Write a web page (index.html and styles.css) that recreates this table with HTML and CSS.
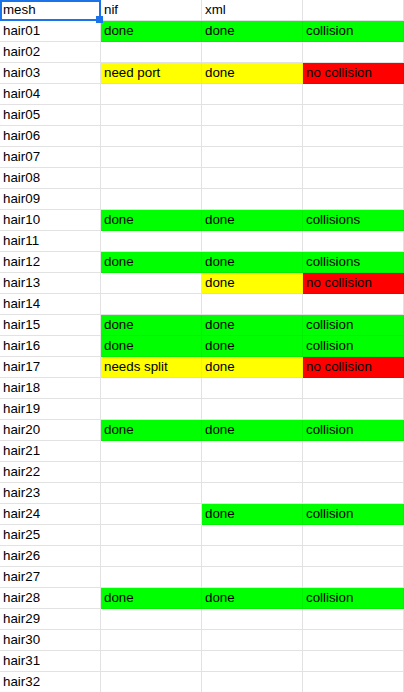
FILE: index.html
```html
<!DOCTYPE html>
<html>
<head>
<meta charset="utf-8">
<link rel="stylesheet" href="styles.css">
</head>
<body>
<div class="sheet">
  <div class="cell selected">mesh<span class="sel-box"></span><span class="handle"></span></div><div class="cell">nif</div><div class="cell">xml</div><div class="cell"></div>
  <div class="cell">hair01</div><div class="cell g">done</div><div class="cell g">done</div><div class="cell g">collision</div>
  <div class="cell">hair02</div><div class="cell"></div><div class="cell"></div><div class="cell"></div>
  <div class="cell">hair03</div><div class="cell y">need port</div><div class="cell y">done</div><div class="cell r">no collision</div>
  <div class="cell">hair04</div><div class="cell"></div><div class="cell"></div><div class="cell"></div>
  <div class="cell">hair05</div><div class="cell"></div><div class="cell"></div><div class="cell"></div>
  <div class="cell">hair06</div><div class="cell"></div><div class="cell"></div><div class="cell"></div>
  <div class="cell">hair07</div><div class="cell"></div><div class="cell"></div><div class="cell"></div>
  <div class="cell">hair08</div><div class="cell"></div><div class="cell"></div><div class="cell"></div>
  <div class="cell">hair09</div><div class="cell"></div><div class="cell"></div><div class="cell"></div>
  <div class="cell">hair10</div><div class="cell g">done</div><div class="cell g">done</div><div class="cell g">collisions</div>
  <div class="cell">hair11</div><div class="cell"></div><div class="cell"></div><div class="cell"></div>
  <div class="cell">hair12</div><div class="cell g">done</div><div class="cell g">done</div><div class="cell g">collisions</div>
  <div class="cell">hair13</div><div class="cell"></div><div class="cell y">done</div><div class="cell r">no collision</div>
  <div class="cell">hair14</div><div class="cell"></div><div class="cell"></div><div class="cell"></div>
  <div class="cell">hair15</div><div class="cell g">done</div><div class="cell g">done</div><div class="cell g">collision</div>
  <div class="cell">hair16</div><div class="cell g">done</div><div class="cell g">done</div><div class="cell g">collision</div>
  <div class="cell">hair17</div><div class="cell y">needs split</div><div class="cell y">done</div><div class="cell r">no collision</div>
  <div class="cell">hair18</div><div class="cell"></div><div class="cell"></div><div class="cell"></div>
  <div class="cell">hair19</div><div class="cell"></div><div class="cell"></div><div class="cell"></div>
  <div class="cell">hair20</div><div class="cell g">done</div><div class="cell g">done</div><div class="cell g">collision</div>
  <div class="cell">hair21</div><div class="cell"></div><div class="cell"></div><div class="cell"></div>
  <div class="cell">hair22</div><div class="cell"></div><div class="cell"></div><div class="cell"></div>
  <div class="cell">hair23</div><div class="cell"></div><div class="cell"></div><div class="cell"></div>
  <div class="cell">hair24</div><div class="cell"></div><div class="cell g">done</div><div class="cell g">collision</div>
  <div class="cell">hair25</div><div class="cell"></div><div class="cell"></div><div class="cell"></div>
  <div class="cell">hair26</div><div class="cell"></div><div class="cell"></div><div class="cell"></div>
  <div class="cell">hair27</div><div class="cell"></div><div class="cell"></div><div class="cell"></div>
  <div class="cell">hair28</div><div class="cell g">done</div><div class="cell g">done</div><div class="cell g">collision</div>
  <div class="cell">hair29</div><div class="cell"></div><div class="cell"></div><div class="cell"></div>
  <div class="cell">hair30</div><div class="cell"></div><div class="cell"></div><div class="cell"></div>
  <div class="cell">hair31</div><div class="cell"></div><div class="cell"></div><div class="cell"></div>
  <div class="cell">hair32</div><div class="cell"></div><div class="cell"></div><div class="cell"></div>
</div>
</body>
</html>
```
FILE: styles.css
```css
html, body {
  margin: 0;
  padding: 0;
  background: #ffffff;
  overflow: hidden;
}
.sheet {
  display: grid;
  grid-template-columns: 101px 101px 101px 101px;
  grid-auto-rows: 21px;
  font-family: "Liberation Sans", Arial, sans-serif;
  font-size: 13.33px;
  color: #000000;
}
.cell {
  box-sizing: border-box;
  height: 21px;
  line-height: 20px;
  padding-left: 3px;
  border-right: 1px solid #e2e2e2;
  border-bottom: 1px solid #e2e2e2;
  white-space: nowrap;
  overflow: hidden;
}
.cell.g { background: #00ff00; border-color: rgba(0, 0, 0, 0.05); }
.cell.y { background: #ffff00; border-color: rgba(0, 0, 0, 0.04); }
.cell.r { background: #ff0000; border-color: rgba(0, 0, 0, 0.05); }
.selected {
  position: relative;
  overflow: visible;
  z-index: 2;
}
.sel-box {
  position: absolute;
  left: 0;
  top: 0;
  width: 101px;
  height: 21px;
  box-sizing: border-box;
  border: 2px solid #1a73e8;
  pointer-events: none;
}
.handle {
  position: absolute;
  left: 96px;
  top: 16px;
  width: 7px;
  height: 7px;
  background: #1a73e8;
  border: 1px solid #ffffff;
  box-sizing: border-box;
  display: none;
}
.selected .handle {
  display: block;
  left: 96px;
  top: 16px;
  width: 7px;
  height: 7px;
  border: none;
}
```
